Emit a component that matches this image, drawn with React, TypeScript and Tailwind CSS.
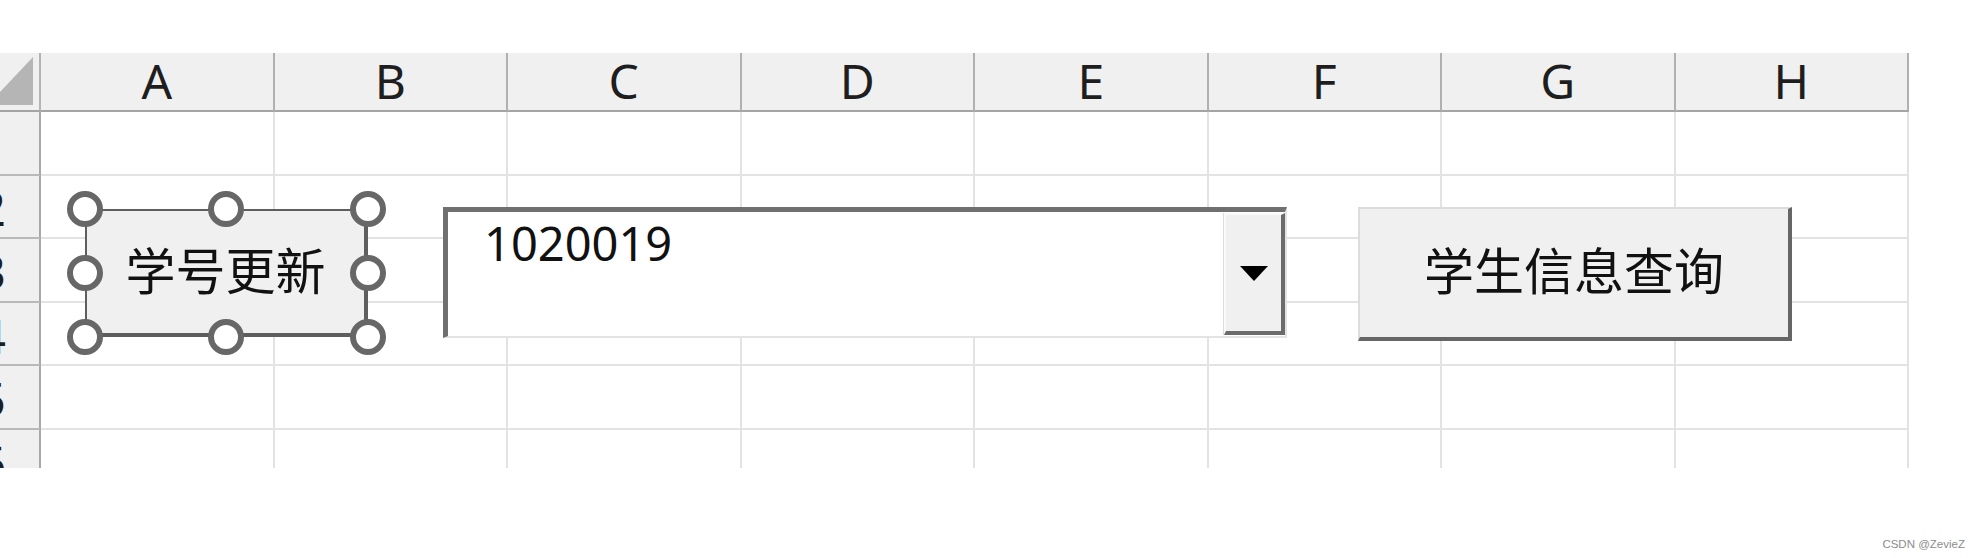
import React from "react";

const cols = ["A", "B", "C", "D", "E", "F", "G", "H"];
const rows = ["1", "2", "3", "4", "5", "6"];

const handleCls =
  "w-[36px] h-[36px] rounded-full bg-white border-[6px] border-[#676767]";

export default function App() {
  return (
    <div className="relative w-[1980px] h-[558px] bg-white overflow-hidden font-['Noto_Sans',sans-serif]">
      <div className="pt-[53px]">
        <div className="relative w-[1909px] h-[415px] overflow-hidden">
          <div className="grid grid-cols-[41px_repeat(8,233.5px)] grid-rows-[59px_repeat(6,63.6px)]">
            {/* corner */}
            <div className="relative bg-[#f0f0f0] border-r-2 border-b-2 border-r-[#b4b4b4] border-b-[#a4a4a4]">
              <svg className="absolute left-0 top-0" width="41" height="59" viewBox="0 0 41 59">
                <polygon points="33,4 33,52 0,52 0,39" fill="#b5b5b5" />
              </svg>
            </div>
            {cols.map((c) => (
              <div
                key={c}
                className="flex items-center justify-center bg-[#f0f0f0] border-r-2 border-b-2 border-r-[#b0b0b0] border-b-[#a4a4a4] text-[48px] leading-[48px] text-[#1e1e1e] pb-[2px]"
              >
                {c}
              </div>
            ))}
            {rows.map((r) => (
              <React.Fragment key={r}>
                <div className="flex items-center justify-end pr-[33px] overflow-hidden bg-[#f0f0f0] border-r-2 border-b-2 border-r-[#a8a8a8] border-b-[#b9b9b9] text-[48px] leading-[48px] text-[#1e1e1e] pt-[4px]">
                  {r}
                </div>
                {cols.map((c) => (
                  <div key={c} className="border-r-2 border-b-2 border-[#e3e3e3] bg-white" />
                ))}
              </React.Fragment>
            ))}
          </div>

          {/* form controls floating over the sheet */}
          <div className="absolute inset-x-0 top-[154px] flex items-start pl-[85px]">
            {/* 学号更新 button (selected, with sizing handles) */}
            <div className="relative mt-[2px] w-[283px] h-[128px]">
              <div className="w-full h-full flex items-center justify-center pb-[8px] bg-[#f0f0f0] border-t-2 border-l-2 border-r-4 border-b-4 border-[#5e5e5e] text-[50px] leading-none text-[#111] font-['Noto_Sans_CJK_SC',sans-serif]">
                学号更新
              </div>
              <div className="absolute -inset-[18px] grid grid-cols-3 grid-rows-3">
                <div className={handleCls + " justify-self-start self-start"} />
                <div className={handleCls + " justify-self-center self-start"} />
                <div className={handleCls + " justify-self-end self-start"} />
                <div className={handleCls + " justify-self-start self-center"} />
                <div />
                <div className={handleCls + " justify-self-end self-center"} />
                <div className={handleCls + " justify-self-start self-end"} />
                <div className={handleCls + " justify-self-center self-end"} />
                <div className={handleCls + " justify-self-end self-end"} />
              </div>
            </div>

            {/* combo box */}
            <div className="ml-[75px] w-[844px] h-[131px] flex bg-white border-t-[5px] border-l-[5px] border-r-2 border-b-2 border-t-[#707070] border-l-[#707070] border-r-[#e3e3e3] border-b-[#e3e3e3]">
              <div className="flex-1 pl-[36px] pt-[8px] text-[47px] leading-none text-[#111]">
                1020019
              </div>
              <div className="w-[61px] my-[1px] flex items-center justify-center bg-[#f0f0f0] border-t-2 border-l-2 border-r-4 border-b-4 border-t-[#fafafa] border-l-[#fafafa] border-r-[#6b6b6b] border-b-[#6b6b6b] shadow-[-1px_0_0_#dcdcdc]">
                <div className="w-0 h-0 border-l-[14px] border-r-[14px] border-t-[15px] border-l-transparent border-r-transparent border-t-black" />
              </div>
            </div>

            {/* 学生信息查询 button */}
            <div className="ml-[71px] w-[434px] h-[134px] flex items-center justify-center pb-[11px] bg-[#f0f0f0] border-t-2 border-l-2 border-r-4 border-b-4 border-t-[#dcdcdc] border-l-[#dcdcdc] border-r-[#666666] border-b-[#666666] text-[50px] leading-none text-[#111] font-['Noto_Sans_CJK_SC',sans-serif]">
              学生信息查询
            </div>
          </div>
        </div>
      </div>

      <div className="absolute right-[15px] bottom-[8px] text-[11.5px] leading-none text-[#8c8c8c] font-['Liberation_Sans',sans-serif]">
        CSDN @ZevieZ
      </div>
    </div>
  );
}
